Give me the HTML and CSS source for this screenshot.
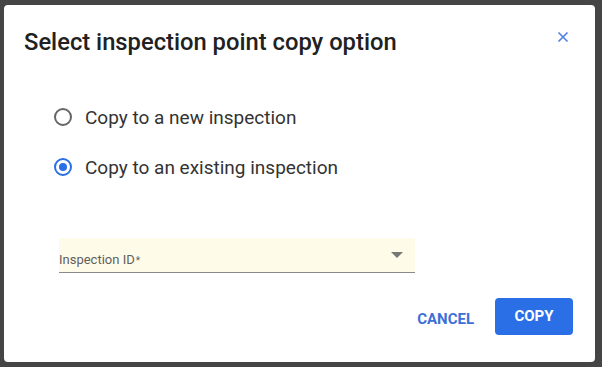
FILE: index.html
```html
<!DOCTYPE html>
<html>
<head>
<meta charset="utf-8">
<link rel="stylesheet" href="styles.css">
</head>
<body>
<div class="dialog">
  <div class="header">
    <h1 class="title">Select inspection point copy option</h1>
    <button class="close" aria-label="close">
      <svg width="12" height="12" viewBox="0 0 12 12"><path d="M1.5 1.5 L10.5 10.5 M10.5 1.5 L1.5 10.5" stroke="#4f7fe0" stroke-width="1.6" fill="none"/></svg>
    </button>
  </div>
  <div class="content">
    <label class="radio-row"><span class="radio"></span><span class="radio-label">Copy to a new inspection</span></label>
    <label class="radio-row"><span class="radio checked"></span><span class="radio-label">Copy to an existing inspection</span></label>
    <div class="field">
      <span class="field-label">Inspection ID<span class="req">*</span></span>
      <span class="caret"></span>
    </div>
  </div>
  <div class="actions">
    <button class="btn text">CANCEL</button>
    <button class="btn primary">COPY</button>
  </div>
</div>
</body>
</html>
```
FILE: styles.css
```css
html, body { margin: 0; padding: 0; }
body {
  background: #454545;
  width: 602px;
  height: 367px;
  box-sizing: border-box;
  padding: 5px 7px 5px 4px;
  font-family: Roboto, "Liberation Sans", sans-serif;
}
.dialog {
  background: #fff;
  border-radius: 4px;
  height: 357px;
  display: flex;
  flex-direction: column;
}
.header {
  display: flex;
  align-items: center;
  justify-content: space-between;
  padding: 24px 26px 0 20px;
  height: 26px;
}
.title {
  margin: 0;
  font-size: 23.75px;
  font-weight: 500;
  line-height: 26px;
  color: #212121;
}
.close {
  border: 0;
  background: none;
  padding: 0;
  width: 12px;
  height: 12px;
  display: flex;
  margin-top: -10px;
}
.content {
  padding: 37px 0 0 50px;
  display: flex;
  flex-direction: column;
}
.radio-row {
  display: flex;
  align-items: center;
  height: 50px;
}
.radio {
  width: 14px;
  height: 14px;
  border: 2px solid #666;
  border-radius: 50%;
  box-sizing: content-box;
  position: relative;
}
.radio.checked { border-color: #2a6fe6; }
.radio.checked::after {
  content: "";
  position: absolute;
  left: 3px; top: 3px;
  width: 8px; height: 8px;
  border-radius: 50%;
  background: #2a6fe6;
}
.radio-label {
  margin-left: 13px;
  font-size: 19px;
  color: #333;
}
.field {
  margin: 46px 0 0 5px;
  width: 356px;
  height: 34px;
  background: #fffbe9;
  border-bottom: 1px solid #8a8a8a;
  display: flex;
  align-items: center;
  justify-content: space-between;
  box-sizing: content-box;
}
.field-label {
  font-size: 13px;
  color: #5f5f5f;
  padding-top: 8px;
}
.req { font-size: 10px; margin-left: 1px; }
.caret {
  width: 0; height: 0;
  border-left: 6px solid transparent;
  border-right: 6px solid transparent;
  border-top: 6px solid #777;
  margin-right: 12px;
}
.actions {
  display: flex;
  justify-content: flex-end;
  align-items: center;
  gap: 12px;
  padding: 22px 22px 0 0;
}
.btn {
  font-family: Roboto, "Liberation Sans", sans-serif;
  font-size: 15px;
  font-weight: 700;
  border: 0;
  border-radius: 4px;
  height: 37px;
  cursor: pointer;
}
.btn.text {
  background: none;
  color: #3d6fd9;
  padding: 0 9px;
  margin-top: 5px;
}
.btn.primary {
  background: #2a6fe6;
  color: #fff;
  width: 78px;
}
```
